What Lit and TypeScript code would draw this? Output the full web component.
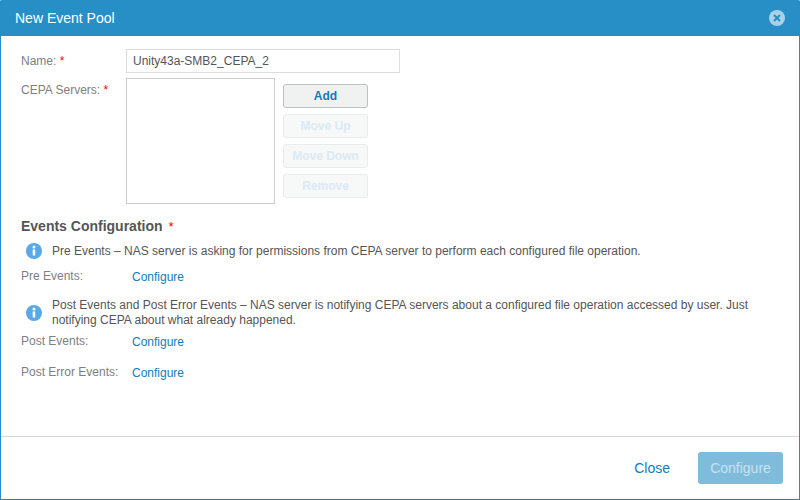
import { LitElement, html, css, svg } from "lit";
import { customElement } from "lit/decorators.js";

const infoIcon = svg`<svg class="info" width="16" height="16" viewBox="0 0 16 16"><circle cx="8" cy="8" r="8" fill="#5aa9e6"/><circle cx="8" cy="4" r="1.5" fill="#fff"/><path d="M6.6 6.6h2.6v6h-2.4z" fill="#fff"/></svg>`;

@customElement("app-root")
export class AppRoot extends LitElement {
  static styles = css`
    :host { display: block; width: 800px; height: 500px; font-family: "Liberation Sans", Arial, sans-serif; font-size: 12px; color: #555; }
    * { box-sizing: border-box; }
    .dialog { width: 800px; height: 500px; display: flex; flex-direction: column; background: #fff; border: 1px solid #278fc6; border-top: none; border-bottom-color: #2b7ea8; border-radius: 2px 2px 0 0; }
    .header { height: 36px; margin: 0 -1px; padding: 0 15px; background: #278fc6; color: #fff; font-size: 14px; display: flex; align-items: center; justify-content: space-between; flex: none; border-radius: 2px 2px 0 0; }
    .close { display: block; }
    .body { flex: 1; padding: 13px 20px 0; }
    .label { width: 105px; color: #808080; flex: none; }
    .req { color: #f00; }
    .name-row { display: flex; height: 24px; align-items: center; }
    .name-row .label { padding-bottom: 1px; }
    .input { width: 274px; height: 24px; border: 1px solid #ddd; padding: 0 6px; display: flex; align-items: center; color: #555; }
    .servers { display: flex; margin-top: 5px; }
    .servers .label { padding-top: 5px; line-height: 14px; }
    .list { width: 149px; height: 126px; border: 1px solid #ccc; }
    .btns { display: flex; flex-direction: column; gap: 6px; margin: 6px 0 0 8px; }
    .btn { width: 85px; height: 24px; border: 1px solid #e9eced; background: #f7f8f8; border-radius: 3px; color: #dbeaf3; font-weight: bold; display: flex; align-items: center; justify-content: center; }
    .btn.on { border-color: #bcc0c1; background: #f0f2f2; color: #0f7dbb; }
    h3 { margin: 14px 0 0; font-size: 14px; line-height: 16px; font-weight: bold; color: #555; }
    h3 .req { font-weight: normal; font-size: 13px; margin-left: 2px; }
    .note { display: flex; align-items: center; gap: 10px; padding-left: 5px; line-height: 15px; color: #555; }
    .note1 { margin-top: 8px; height: 16px; }
    .note2 { margin-top: 13px; height: 30px; }
    .info { flex: none; display: block; }
    .row { display: flex; height: 16px; line-height: 14px; }
    .row .label { width: 111px; }
    .row a { color: #0f7dbb; text-decoration: none; padding-top: 1px; }
    .r1 { margin-top: 10px; }
    .r2 { margin-top: 6px; }
    .r3 { margin-top: 15px; }
    .footer { flex: none; height: 63px; border-top: 1px solid #d5d5d5; display: flex; align-items: center; justify-content: flex-end; padding: 0 16px 0 0; margin: 0; }
    .closeb { color: #0f7dbb; font-size: 14px; margin-right: 28px; }
    .cfg { width: 85px; height: 32px; background: #7fbcdb; border-radius: 3px; color: #c6e2f0; font-size: 14px; display: flex; align-items: center; justify-content: center; }
  `;

  render() {
    return html`<div class="dialog">
      <div class="header"><span>New Event Pool</span>
        <svg class="close" width="16" height="16" viewBox="0 0 16 16"><circle cx="8" cy="8" r="8" fill="#a9d2e8"/><path d="M5 5l6 6M11 5l-6 6" stroke="#278fc6" stroke-width="2" fill="none"/></svg>
      </div>
      <div class="body">
        <div class="name-row"><span class="label">Name: <span class="req">*</span></span><div class="input">Unity43a-SMB2_CEPA_2</div></div>
        <div class="servers"><span class="label">CEPA Servers: <span class="req">*</span></span><div class="list"></div>
          <div class="btns"><div class="btn on">Add</div><div class="btn">Move Up</div><div class="btn">Move Down</div><div class="btn">Remove</div></div>
        </div>
        <h3>Events Configuration <span class="req">*</span></h3>
        <div class="note note1">${infoIcon}<span>Pre Events – NAS server is asking for permissions from CEPA server to perform each configured file operation.</span></div>
        <div class="row r1"><span class="label">Pre Events:</span><a>Configure</a></div>
        <div class="note note2">${infoIcon}<span>Post Events and Post Error Events – NAS server is notifying CEPA servers about a configured file operation accessed by user. Just<br>notifying CEPA about what already happened.</span></div>
        <div class="row r2"><span class="label">Post Events:</span><a>Configure</a></div>
        <div class="row r3"><span class="label">Post Error Events:</span><a>Configure</a></div>
      </div>
      <div class="footer"><span class="closeb">Close</span><div class="cfg">Configure</div></div>
    </div>`;
  }
}
